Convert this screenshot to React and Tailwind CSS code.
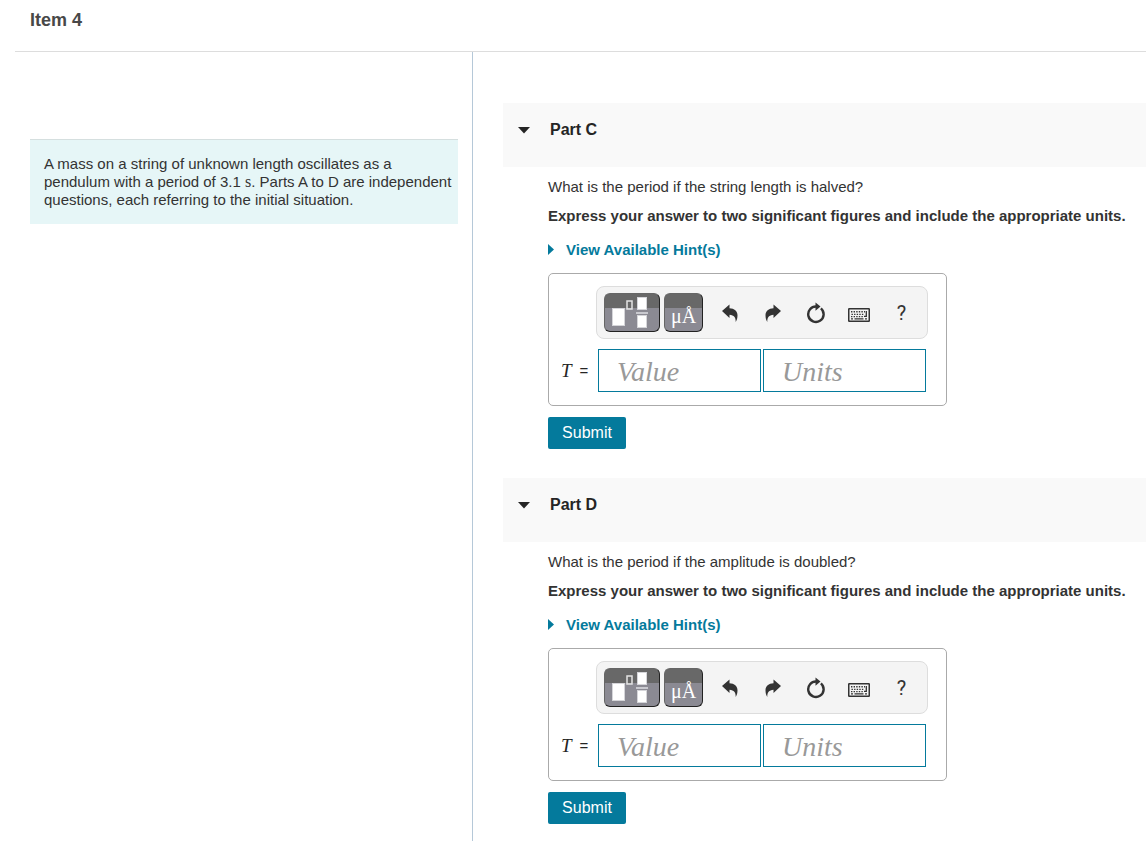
const parts = [
    {
        id: 'C',
        question: 'What is the period if the string length is halved?',
    },
    {
        id: 'D',
        question: 'What is the period if the amplitude is doubled?',
    },
];

function TemplateIcon() {
    return (
        <svg width="54" height="38" viewBox="0 0 54 38" fill="none" aria-hidden="true">
            <rect x="7.5" y="14.5" width="12" height="17" fill="#fff" stroke="#d5d5d9" />
            <rect x="22" y="7" width="5" height="8" stroke="#e4e4e4" strokeWidth="1.5" />
            <rect x="32.5" y="3.5" width="9" height="12" fill="#fff" stroke="#d5d5d9" />
            <rect x="31" y="18" width="12" height="2" fill="#c9c9cf" />
            <rect x="32.5" y="21.5" width="9" height="12" fill="#fff" stroke="#d5d5d9" />
        </svg>
    );
}

function UndoIcon() {
    return (
        <svg width="16" height="20" viewBox="0 0 16 20" fill="#333" aria-hidden="true">
            <path d="M0 8 7.5 1.5v3.700c4.800.2 8 2.800 8 7 0 2.800-.6 4.800-1.800 6.800.2-4.500-1.700-7-6.200-7.300v3.300z" />
        </svg>
    );
}

function RedoIcon() {
    return (
        <svg width="16" height="20" viewBox="0 0 16 20" fill="#333" aria-hidden="true">
            <path d="M16 8 8.5 1.500v3.700c-4.800.2-8 2.800-8 7 0 2.800.6 4.800 1.800 6.800-.2-4.500 1.700-7 6.200-7.300v3.300z" />
        </svg>
    );
}

function ResetIcon() {
    return (
        <svg width="20" height="22" viewBox="0 0 20 22" fill="none" aria-hidden="true">
            <path d="M14.900 6.400A7.700 7.700 0 1 1 10.500 4.600" stroke="#333" strokeWidth="2.400" />
            <path d="M9.500 0.500 14.500 4.600 9.500 8.700z" fill="#333" />
        </svg>
    );
}

function KeyboardIcon() {
    return (
        <svg width="22" height="14" viewBox="0 0 22 14" fill="none" aria-hidden="true">
            <rect x="0.75" y="0.75" width="20.5" height="12.5" rx="0.5" stroke="#333" strokeWidth="1.5" />
            <path d="M3 3.700h14" stroke="#333" strokeWidth="1.400" strokeDasharray="1.400 1.200" />
            <path d="M3.500 6.300h12M3 8.700h12" stroke="#333" strokeWidth="1.300" strokeDasharray="1.400 1.200" />
            <path d="M3 10.900h2M6.500 10.900h9M17 10.900h2M18.300 3v5.400h-2.300" stroke="#333" strokeWidth="1.300" />
        </svg>
    );
}

function ToolButton({ label, children }) {
    return (
        <button type="button" aria-label={label} className="flex h-10 w-[43px] items-center justify-center text-[#333]">
            {children}
        </button>
    );
}

function Toolbar() {
    const darkButton =
        'flex h-[39px] items-center justify-center rounded-md border border-[#666] border-r-[#222] border-b-[#222] bg-linear-to-b from-[#686868] from-38% to-[#8b8a93] to-38% text-white';

    return (
        <div className="flex h-[53px] items-center rounded-lg border border-[#ddd] bg-[#f4f4f4] pl-[7px]">
            <button type="button" aria-label="Templates" className={`${darkButton} mr-1 w-14`}>
                <TemplateIcon />
            </button>
            <button type="button" aria-label="Symbols" className={`${darkButton} mr-[5px] w-[39px] pt-1.5 font-['Liberation_Serif',serif] text-xl leading-none`}>
                μÅ
            </button>
            <ToolButton label="Undo"><UndoIcon /></ToolButton>
            <ToolButton label="Redo"><RedoIcon /></ToolButton>
            <ToolButton label="Reset"><ResetIcon /></ToolButton>
            <ToolButton label="Keyboard shortcuts">
                <span className="pt-1"><KeyboardIcon /></span>
            </ToolButton>
            <ToolButton label="Help">
                <span className="font-[Roboto,sans-serif] text-xl">?</span>
            </ToolButton>
        </div>
    );
}

function AnswerBox({ id }) {
    const field =
        "h-[43px] w-[163px] border border-[#047a9c] bg-white pt-0.5 pl-[18px] font-['Liberation_Serif',serif] text-[28px] italic text-[#333] placeholder:text-[#999] placeholder:opacity-100";

    return (
        <div className="w-[399px] rounded-[5px] border border-[#aaa] pt-3 pr-[18px] pb-[13px] pl-3">
            <div className="ml-[35px]">
                <Toolbar />
            </div>
            <div className="mt-2.5 flex items-center">
                <label htmlFor={`value-${id}`} className="flex w-[37px] items-center gap-2 text-[15px] text-[#252525]">
                    <i className="font-['Liberation_Serif',serif] text-[19px] leading-none">T</i>
                    <span>=</span>
                </label>
                <input id={`value-${id}`} type="text" placeholder="Value" className={`${field} mr-0.5`} />
                <input type="text" aria-label="Units" placeholder="Units" className={field} />
            </div>
        </div>
    );
}

function Part({ id, question }) {
    return (
        <section className="mb-[29px]">
            <header className="h-16 bg-[#f9f9f9] pt-4 pl-[15px]">
                <button type="button" aria-expanded="true" className="flex items-center text-base leading-[22px] font-bold text-[#252525]">
                    <svg width="12" height="7" viewBox="0 0 12 7" className="mr-5" aria-hidden="true">
                        <path d="M0 0h12L6 6.500z" fill="#252525" />
                    </svg>
                    Part {id}
                </button>
            </header>
            <div className="pt-[11px] pl-[45px] text-[15px] leading-[18px] text-[#333]">
                <p>{question}</p>
                <p className="mt-[11px] font-bold">
                    Express your answer to two significant figures and include the appropriate units.
                </p>
                <a href={`#hints-${id}`} className="mt-4 mb-3.5 flex items-center font-bold text-[#047a9c]">
                    <svg width="6" height="12" viewBox="0 0 6 12" className="mr-3" aria-hidden="true">
                        <path d="M0 0 6 5.500 0 11z" fill="#047a9c" />
                    </svg>
                    View Available Hint(s)
                </a>
                <AnswerBox id={id} />
                <button type="submit" className="mt-[11px] block h-8 w-[78px] rounded-xs bg-[#047a9c] text-base text-white">
                    Submit
                </button>
            </div>
        </section>
    );
}

export default function App() {
    return (
        <div className="flex min-h-screen flex-col bg-white pl-[15px] font-['Liberation_Sans',Arial,sans-serif]">
            <header className="h-[52px] border-b border-[#ddd] pt-2 pl-[15px]">
                <h1 className="text-lg leading-6 font-bold text-[#484848]">Item 4</h1>
            </header>
            <main className="flex flex-1">
                {/* Problem statement */}
                <aside className="w-[458px] shrink-0 border-r border-[#b5c8d8] pt-[87px] pr-3.5 pl-[15px]">
                    <p className="border-t border-[#d5dfdf] bg-[#e6f6f7] py-[15px] pl-3.5 text-[15px] leading-[18px] text-[#333]">
                        A mass on a string of unknown length oscillates as a
                        <br />
                        pendulum with a period of 3.1{' '}
                        <span className="font-['Liberation_Serif',serif] text-base leading-none">s</span>. Parts A to D
                        are independent questions, each referring to the initial situation.
                    </p>
                </aside>
                {/* Question parts */}
                <div className="min-w-0 flex-1 pt-[51px] pl-[30px]">
                    {parts.map((part) => (
                        <Part key={part.id} id={part.id} question={part.question} />
                    ))}
                </div>
            </main>
        </div>
    );
}
